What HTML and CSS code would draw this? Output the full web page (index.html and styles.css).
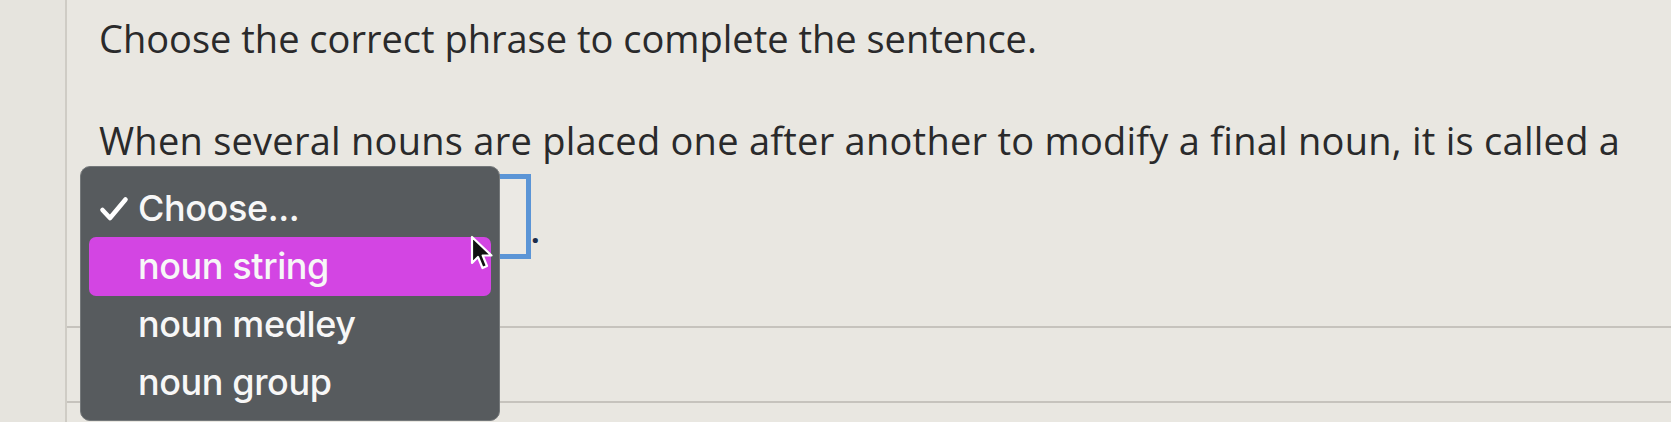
FILE: index.html
```html
<!DOCTYPE html>
<html>
<head>
<meta charset="utf-8">
<link rel="stylesheet" href="styles.css">
</head>
<body>
<div class="page">
  <div class="rail"></div>
  <main class="main">
    <p class="prompt">Choose the correct phrase to complete the sentence.</p>
    <p class="sentence">When several nouns are placed one after another to modify a final noun, it is called a</p>
    <div class="answer-row">
      <div class="select-box"></div><span class="period">.</span>
    </div>
    <div class="table">
      <div class="row"></div>
      <div class="row last"></div>
    </div>
  </main>
</div>

<div class="menu">
  <div class="option checked">
    <svg class="check" viewBox="0 0 30 26" width="30" height="26"><path d="M3.5 14 L11 22 L26.5 3.5" fill="none" stroke="#fff" stroke-width="4.6" stroke-linecap="round" stroke-linejoin="round"/></svg>
    Choose...
  </div>
  <div class="option active">noun string</div>
  <div class="option">noun medley</div>
  <div class="option">noun group</div>
  <svg class="cursor" viewBox="0 0 24 36" width="24" height="36"><path d="M2 2 L2 28 L8 22 L12.5 33 L17 31 L12.7 20.5 L21.5 20.5 Z" fill="#111" stroke="#fff" stroke-width="2.2" stroke-linejoin="round"/></svg>
</div>
</body>
</html>
```
FILE: styles.css
```css
html, body {
  margin: 0;
  padding: 0;
  height: 100%;
}
body {
  background: #e9e7e1;
  overflow: hidden;
  font-family: "Open Sans", "DejaVu Sans", sans-serif;
}
.page {
  display: flex;
  height: 422px;
  overflow: hidden;
}
.rail {
  width: 65px;
  flex: none;
  border-right: 2px solid #cfccc5;
  background: #e6e4de;
}
.main {
  flex: 1;
  padding-left: 32px;
  position: relative;
}
.prompt, .sentence {
  margin: 0;
  color: #2a2a2b;
  font-size: 38px;
  line-height: 50px;
  white-space: nowrap;
}
.prompt {
  margin-top: 13px;
}
.sentence {
  margin-top: 52px;
  letter-spacing: 0.25px;
}
.answer-row {
  display: flex;
  align-items: flex-end;
  margin-top: 9px;
}
.select-box {
  width: 422px;
  height: 75px;
  border: 5px solid #5b95d6;
  background: #ebe9e4;
}
.period {
  font-size: 30px;
  line-height: 30px;
  font-weight: 700;
  color: #1d2d4a;
  margin-bottom: 12px;
}
.table {
  margin-left: -32px;
  margin-top: 67px;
}
.row {
  height: 73px;
  border-top: 2px solid #c6c3bd;
}
.row.last {
  height: 20px;
}
.menu {
  position: absolute;
  left: 80px;
  top: 166px;
  width: 420px;
  height: 255px;
  box-sizing: border-box;
  padding: 12px 8px;
  background: #575b5e;
  border: 1.5px solid #74787a;
  border-radius: 10px;
  font-family: "Inter", "Liberation Sans", sans-serif;
  font-weight: 500;
  color: #f7f7f7;
}
.option {
  position: relative;
  height: 58px;
  line-height: 58px;
  font-size: 36px;
  padding-left: 49px;
  border-radius: 7px;
  letter-spacing: -0.4px;
}
.option.active {
  background: #d345e3;
  height: 59px;
  line-height: 59px;
  margin-bottom: -1px;
}
.check {
  position: absolute;
  left: 10px;
  top: 17px;
}
.cursor {
  position: absolute;
  left: 389px;
  top: 68px;
}
```
